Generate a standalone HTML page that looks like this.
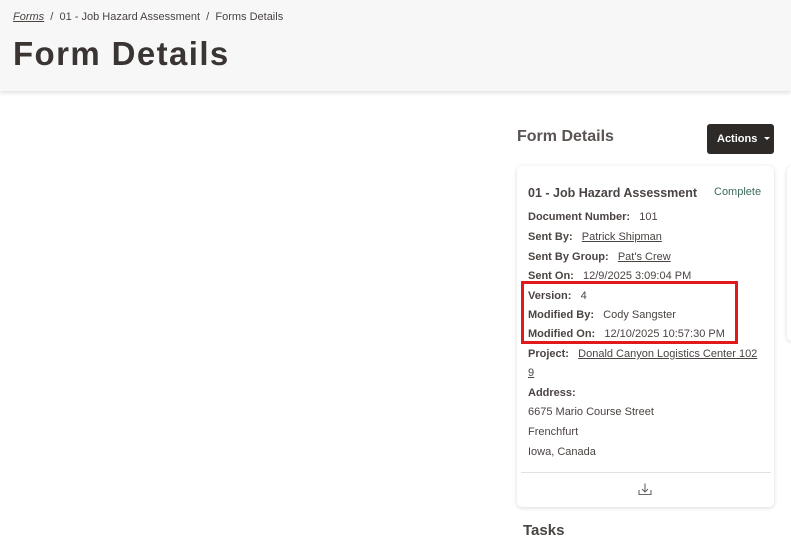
<!DOCTYPE html>
<html><head><style>
*{margin:0;padding:0;box-sizing:border-box}
body{width:791px;height:535px;overflow:hidden;background:#fff;font-family:"Liberation Sans",sans-serif;color:#4a4442;position:relative}
.hdr{position:absolute;left:0;top:0;width:791px;height:91px;background:#f7f7f7;box-shadow:0 2px 4px rgba(0,0,0,.12)}
.bc{position:absolute;left:13px;top:11px;font-size:11px;color:#4a4442}
.bc u{font-style:italic}
h1{position:absolute;left:13px;top:35px;font-size:33px;font-weight:bold;color:#3a3533;letter-spacing:1.4px}
.ft{position:absolute;left:517px;top:128px;font-size:16px;font-weight:bold;color:#5a5452}
.btn{position:absolute;left:707px;top:124px;width:67px;height:30px;background:#2e2a28;border-radius:3px;color:#fff;font-size:11px;font-weight:bold;padding:9px 0 0 10px}
.btn:after{content:"";position:absolute;left:57px;top:13px;border:3px solid transparent;border-top:3px solid #fff}
.card{position:absolute;left:517px;top:166px;width:257px;height:341px;background:#fff;border-radius:5px;box-shadow:0 1px 5px rgba(0,0,0,.15)}
.card2{position:absolute;left:787px;top:166px;width:20px;height:175px;border-radius:5px;box-shadow:0 1px 5px rgba(0,0,0,.15)}
.t{position:absolute;font-size:11px;white-space:nowrap}
.b{font-weight:bold}
.ti{position:absolute;left:528px;top:186px;font-size:12.5px;font-weight:bold}
.cmp{position:absolute;left:714px;top:186px;font-size:11px;color:#3d6b5a}
.sep{position:absolute;left:521px;top:472px;width:250px;height:1px;background:#e2e2e2}
.red{position:absolute;left:521px;top:281px;width:217px;height:63px;border:3px solid #e0191c}
.tasks{position:absolute;left:523px;top:522px;font-size:15px;font-weight:bold}
</style></head><body>
<div class="hdr"></div>
<div class="bc"><u>Forms</u> &nbsp;/&nbsp; 01 - Job Hazard Assessment &nbsp;/&nbsp; Forms Details</div>
<h1>Form Details</h1>
<div class="ft">Form Details</div>
<div class="btn">Actions</div>
<div class="card2"></div>
<div class="card"></div>
<div class="ti">01 - Job Hazard Assessment</div>
<div class="cmp">Complete</div>
<div class="t" style="left:528px;top:211px"><span class="b">Document Number:</span>&nbsp;&nbsp; 101</div>
<div class="t" style="left:528px;top:231px"><span class="b">Sent By:</span>&nbsp;&nbsp; <u>Patrick Shipman</u></div>
<div class="t" style="left:528px;top:251px"><span class="b">Sent By Group:</span>&nbsp;&nbsp; <u>Pat's Crew</u></div>
<div class="t" style="left:528px;top:270px"><span class="b">Sent On:</span>&nbsp;&nbsp; 12/9/2025 3:09:04 PM</div>
<div class="t" style="left:528px;top:290px"><span class="b">Version:</span>&nbsp;&nbsp; 4</div>
<div class="t" style="left:528px;top:309px"><span class="b">Modified By:</span>&nbsp;&nbsp; Cody Sangster</div>
<div class="t" style="left:528px;top:328px"><span class="b">Modified On:</span>&nbsp;&nbsp; 12/10/2025 10:57:30 PM</div>
<div class="t" style="left:528px;top:348px"><span class="b">Project:</span>&nbsp;&nbsp; <u>Donald Canyon Logistics Center 102</u></div>
<div class="t" style="left:528px;top:367px"><u>9</u></div>
<div class="t b" style="left:528px;top:387px">Address:</div>
<div class="t" style="left:528px;top:406px">6675 Mario Course Street</div>
<div class="t" style="left:528px;top:426px">Frenchfurt</div>
<div class="t" style="left:528px;top:446px">Iowa, Canada</div>
<div class="red"></div>
<div class="sep"></div>
<svg style="position:absolute;left:638px;top:482px" width="14" height="14" viewBox="0 0 14 14" fill="none" stroke="#666" stroke-width="1.1"><path d="M1 8v4.5h12V8M7 1.5v8M4 7l3 3 3-3"/></svg>
<div class="tasks">Tasks</div>
</body></html>
